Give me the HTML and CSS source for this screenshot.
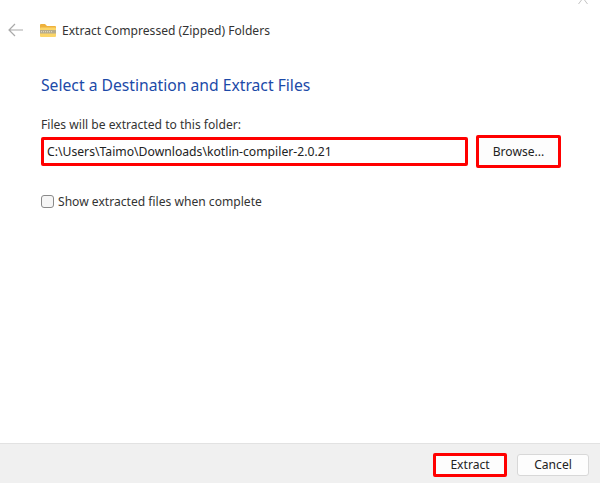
FILE: index.html
```html
<!DOCTYPE html>
<html lang="en">
<head>
<meta charset="utf-8">
<title>Extract Compressed (Zipped) Folders</title>
<link rel="stylesheet" href="styles.css">
</head>
<body>
<div class="window">
  <svg class="close" width="12" height="5" viewBox="0 0 12 5"><path d="M1.5 4L4.5 0M10.5 4L7.5 0" stroke="#c4c4c4" stroke-width="1" fill="none"/></svg>
  <main class="main">
    <header class="titlebar">
      <svg class="back" width="16" height="14" viewBox="0 0 16 14"><path d="M1 7H15M7 1L1 7L7 13" stroke="#a9a9a9" stroke-width="1.2" fill="none"/></svg>
      <svg class="zip" width="16" height="13" viewBox="0 0 16 13">
        <path d="M0 1a1 1 0 0 1 1-1h4l2 2h8a1 1 0 0 1 1 1v2H0z" fill="#eeb13c"/>
        <rect y="3.5" width="16" height="9.5" rx="1" fill="#fbd568"/>
        <rect y="6" width="16" height="3.5" fill="#b5ab8c"/>
        <path d="M1 7.7h11" stroke="#e8e2cc" stroke-width="1" stroke-dasharray="1 1"/>
      </svg>
      <span class="title">Extract Compressed (Zipped) Folders</span>
    </header>
    <h1 class="heading">Select a Destination and Extract Files</h1>
    <label class="label">Files will be extracted to this folder:</label>
    <div class="path-row">
      <div class="path">C:\Users\Taimo\Downloads\kotlin-compiler-2.0.21</div>
      <div class="btn browse">Browse...</div>
    </div>
    <div class="check-row">
      <span class="check"></span>
      <span class="check-text">Show extracted files when complete</span>
    </div>
  </main>
  <footer class="footer">
    <div class="btn extract">Extract</div>
    <div class="btn cancel">Cancel</div>
  </footer>
</div>
</body>
</html>
```
FILE: styles.css
```css
* { box-sizing: border-box; }
html, body { margin: 0; padding: 0; }
body {
  width: 600px;
  height: 483px;
  overflow: hidden;
  background: #fff;
  font-family: "Noto Sans", "Open Sans", sans-serif;
  font-size: 12.1px;
  color: #222;
}
.window {
  position: relative;
  display: flex;
  flex-direction: column;
  height: 483px;
}
.close { position: absolute; top: 0; right: 11px; }
.main { flex: 1; padding: 21px 39px 0 41px; }
.titlebar { display: flex; align-items: center; height: 18px; margin-left: -33px; }
.back { margin-right: 16px; }
.zip { margin-right: 6px; }
.title { font-size: 12.1px; color: #333; }
.heading {
  margin: 35px 0 0;
  font-size: 15.7px;
  line-height: 22px;
  font-weight: 400;
  color: #1c4aa8;
}
.label { display: block; margin-top: 21px; line-height: 16px; color: #333; }
.path-row { display: flex; align-items: center; gap: 8px; margin-top: 2px; height: 33px; }
.path {
  width: 427px;
  height: 29px;
  border: 3px solid #f00;
  border-radius: 2px;
  padding-left: 3px;
  font-size: 12.2px;
  line-height: 23px;
  white-space: nowrap;
}
.btn {
  display: flex;
  align-items: center;
  justify-content: center;
  border-radius: 2px;
  background: #fdfdfd;
  color: #222;
}
.browse { width: 85px; height: 33px; border: 3px solid #f00; }
.check-row { display: flex; align-items: center; gap: 4px; margin-top: 25px; height: 16px; }
.check {
  width: 13px;
  height: 13px;
  border: 1px solid #8a8a8a;
  border-radius: 3px;
  background: #f6f6f6;
}
.check-text { color: #333; }
.footer {
  display: flex;
  align-items: center;
  justify-content: flex-end;
  gap: 10px;
  height: 40px;
  padding: 2px 11px 0 0;
  background: #f0f0f0;
  border-top: 1px solid #e2e2e2;
}
.extract { width: 74px; height: 24px; border: 3px solid #f00; }
.cancel { width: 72px; height: 22px; border: 1px solid #d8d8d8; border-radius: 3px; }
```
